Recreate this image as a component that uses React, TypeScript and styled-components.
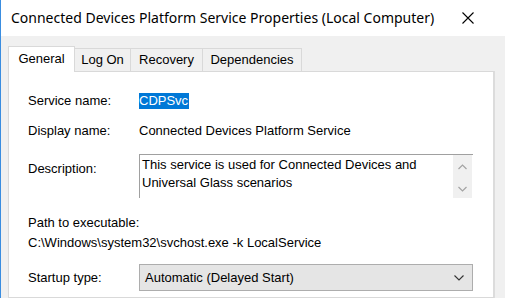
import React from "react";
import styled, { createGlobalStyle } from "styled-components";

const Global = createGlobalStyle`
  html, body { margin: 0; padding: 0; background: #f0f0f0; }
  body { font-family: "Liberation Sans", Arial, sans-serif; }
`;

const Window = styled.div`
  width: 505px;
  height: 298px;
  overflow: hidden;
  box-sizing: border-box;
  border-left: 1px solid #3a8de0;
  background: #f0f0f0;
  display: flex;
  flex-direction: column;
`;

const TitleBar = styled.div`
  height: 36px;
  flex: none;
  background: #ffffff;
  display: flex;
  align-items: center;
  justify-content: space-between;
  padding: 0 31px 0 10px;
`;

const Title = styled.div`
  font-family: "Noto Sans", "Segoe UI", sans-serif;
  font-size: 14px;
  color: #000;
  padding-bottom: 2px;
`;

const Close = styled.svg`
  width: 12px;
  height: 12px;
  margin-bottom: 1px;
`;

const Body = styled.div`
  flex: 1;
  padding: 10px 10px 0 7px;
  display: flex;
  flex-direction: column;
`;

const TabRow = styled.div`
  display: flex;
  align-items: flex-end;
  height: 25px;
  position: relative;
  z-index: 1;
`;

const Tab = styled.div<{ $active?: boolean; $w: number }>`
  box-sizing: border-box;
  width: ${(p) => p.$w}px;
  height: ${(p) => (p.$active ? 26 : 23)}px;
  margin-bottom: ${(p) => (p.$active ? -1 : 0)}px;
  background: ${(p) => (p.$active ? "#ffffff" : "#f0f0f0")};
  border: 1px solid #d9d9d9;
  border-bottom: none;
  ${(p) => (p.$active ? "" : "border-left: none;")}
  font-size: 13px;
  color: #000;
  display: flex;
  align-items: center;
  justify-content: center;
  padding-bottom: ${(p) => (p.$active ? 3 : 1)}px;
`;

const Panel = styled.div`
  flex: 1;
  background: #ffffff;
  border: 1px solid #d9d9d9;
  border-right: 2px solid #dcdcdc;
  padding: 21px 0 0 19px;
  display: flex;
  flex-direction: column;
`;

const Row = styled.div<{ $mt: number; $align?: string }>`
  display: grid;
  grid-template-columns: 111px 334px;
  align-items: ${(p) => p.$align || "center"};
  margin-top: ${(p) => p.$mt}px;
  font-size: 13px;
  line-height: 16px;
  color: #000;
`;

const Label = styled.div<{ $pt?: number }>`
  padding-top: ${(p) => p.$pt || 0}px;
`;

const Value = styled.div``;

const Selected = styled.span`
  background: #0078d7;
  color: #ffffff;
  display: inline-block;
  height: 16px;
  padding: 0 1px 0 0;
`;

const DescBox = styled.div`
  box-sizing: border-box;
  height: 44px;
  border-top: 1px solid #a0a0a0;
  border-left: 1px solid #a0a0a0;
  display: flex;
  background: #fff;
`;

const DescText = styled.div`
  flex: 1;
  padding: 1px 0 0 2px;
  font-size: 13px;
  line-height: 18px;
`;

const ScrollBar = styled.div`
  width: 19px;
  margin-right: 1px;
  background: #f0f0f0;
  display: flex;
  flex-direction: column;
  align-items: center;
  justify-content: space-between;
  padding: 9px 0 6px;
  box-sizing: border-box;
`;

const Arrow = styled.svg`
  width: 9px;
  height: 6px;
`;

const Block = styled.div<{ $mt: number }>`
  margin-top: ${(p) => p.$mt}px;
  font-size: 13px;
  line-height: 16px;
  color: #000;
`;

const PathValue = styled.div`
  margin-top: 4px;
`;

const Select = styled.div`
  box-sizing: border-box;
  height: 27px;
  background: #e5e5e5;
  border: 1px solid #adadad;
  display: flex;
  align-items: center;
  justify-content: space-between;
  padding: 0 8px 0 5px;
`;

const Chevron = styled.svg`
  width: 10px;
  height: 6px;
`;

export default function App() {
  return (
    <>
      <Global />
      <Window>
        <TitleBar>
          <Title>Connected Devices Platform Service Properties (Local Computer)</Title>
          <Close viewBox="0 0 12 12">
            <path d="M0.5 0.5 L11.5 11.5 M11.5 0.5 L0.5 11.5" stroke="#000" strokeWidth="1.1" fill="none" />
          </Close>
        </TitleBar>
        <Body>
          <TabRow>
            <Tab $active $w={67}>General</Tab>
            <Tab $w={56}>Log On</Tab>
            <Tab $w={72}>Recovery</Tab>
            <Tab $w={99}>Dependencies</Tab>
          </TabRow>
          <Panel>
            <Row $mt={0}>
              <Label>Service name:</Label>
              <Value>
                <Selected>CDPSvc</Selected>
              </Value>
            </Row>
            <Row $mt={14}>
              <Label>Display name:</Label>
              <Value>Connected Devices Platform Service</Value>
            </Row>
            <Row $mt={15} $align="start">
              <Label $pt={7}>Description:</Label>
              <DescBox>
                <DescText>
                  This service is used for Connected Devices and
                  <br />
                  Universal Glass scenarios
                </DescText>
                <ScrollBar>
                  <Arrow viewBox="0 0 9 6">
                    <path d="M0.5 5 L4.5 1 L8.5 5" stroke="#a3a3a3" strokeWidth="1.2" fill="none" />
                  </Arrow>
                  <Arrow viewBox="0 0 9 6">
                    <path d="M0.5 1 L4.5 5 L8.5 1" stroke="#a3a3a3" strokeWidth="1.2" fill="none" />
                  </Arrow>
                </ScrollBar>
              </DescBox>
            </Row>
            <Block $mt={17}>
              <div>Path to executable:</div>
              <PathValue>C:\Windows\system32\svchost.exe -k LocalService</PathValue>
            </Block>
            <Row $mt={13}>
              <Label>Startup type:</Label>
              <Select>
                <span>Automatic (Delayed Start)</span>
                <Chevron viewBox="0 0 10 6">
                  <path d="M0.5 0.5 L5 5 L9.5 0.5" stroke="#333" strokeWidth="1.1" fill="none" />
                </Chevron>
              </Select>
            </Row>
          </Panel>
        </Body>
      </Window>
    </>
  );
}
